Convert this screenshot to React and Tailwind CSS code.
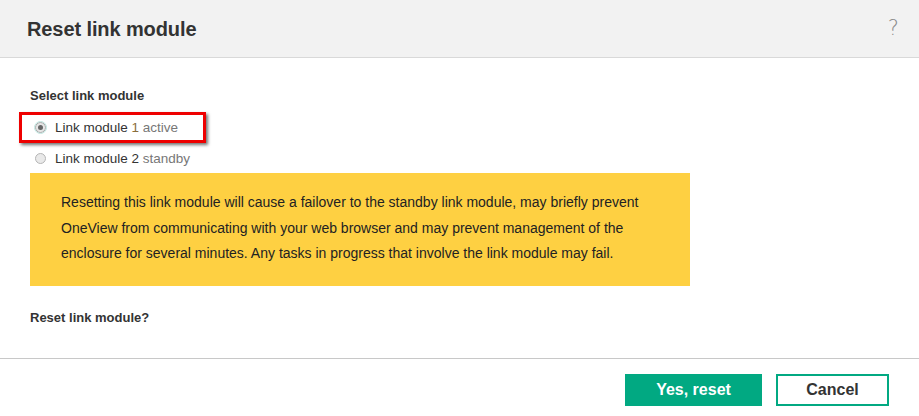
export default function App() {
  return (
    <div className="flex h-[416px] w-[919px] flex-col bg-white font-['Liberation_Sans',Arial,sans-serif] text-[#333]">
      <header className="flex h-[58px] items-center justify-between border-b border-[#d9d9d9] bg-[#f2f2f2] pl-[27px] pr-[20px]">
        <h1 className="text-[20px] font-bold tracking-[-0.1px] text-[#333]">Reset link module</h1>
        <span className="text-[21px] font-light text-[#8a8a8a] font-['DejaVu_Sans',sans-serif]">?</span>
      </header>

      <main className="flex flex-1 flex-col pl-[30px] pt-[30px]">
        <p className="text-[13px] font-bold leading-[16px] text-[#333]">Select link module</p>

        <div className="mt-[8px] -ml-[11px] w-[187px] border-[3px] border-[#ee0000] py-[4px] pl-[13px] shadow-[2px_2px_3px_rgba(0,0,0,0.55)]">
          <label className="flex items-center gap-[9px] text-[13.5px] leading-[17px]">
            <span className="flex h-[11px] w-[11px] items-center justify-center rounded-full border border-[#a9a9a9] bg-[#e6e6e6] outline outline-1 outline-[#bfe6e0]">
              <span className="h-[5px] w-[5px] rounded-full bg-[#666]" />
            </span>
            <span>
              Link module <span className="text-[#8a6d3b]">1</span> <span className="text-[#777]">active</span>
            </span>
          </label>
        </div>

        <label className="mt-[7px] flex items-center gap-[9px] pl-[5px] text-[13.5px] leading-[17px]">
          <span className="h-[11px] w-[11px] rounded-full border border-[#b5b5b5] bg-[#e9e9e9]" />
          <span>
            Link module 2 <span className="text-[#777]">standby</span>
          </span>
        </label>

        <div className="mt-[6px] w-[660px] bg-[#fed042] pb-[19px] pl-[31px] pt-[17px] text-[14px] leading-[25.5px] text-[#222]">
          Resetting this link module will cause a failover to the standby link module, may briefly prevent
          <br />
          OneView from communicating with your web browser and may prevent management of the
          <br />
          enclosure for several minutes. Any tasks in progress that involve the link module may fail.
        </div>

        <p className="mt-[24px] text-[13px] font-bold leading-[16px] text-[#333]">Reset link module?</p>
      </main>

      <footer className="flex h-[58px] items-start justify-end gap-[14px] border-t border-[#c8c8c8] pr-[30px] pt-[15px]">
        <button className="h-[32px] w-[137px] bg-[#01a982] text-[16px] font-bold text-white">Yes, reset</button>
        <button className="h-[32px] w-[113px] border-2 border-[#01a982] bg-white text-[16px] font-bold text-[#333]">Cancel</button>
      </footer>
    </div>
  );
}
